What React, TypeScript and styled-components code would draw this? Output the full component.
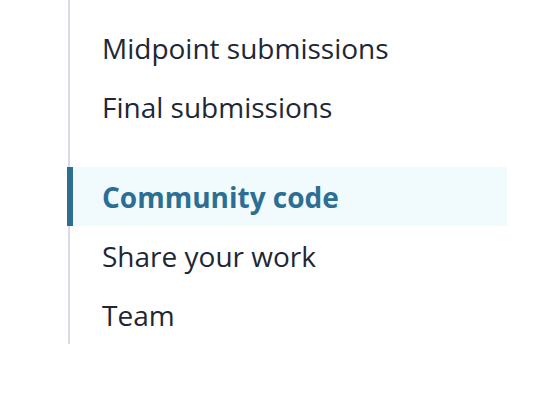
import styled, { createGlobalStyle } from "styled-components";

const GlobalStyle = createGlobalStyle`
    body {
        margin: 0;
        background: #ffffff;
        font-family: "Open Sans", "Noto Sans", sans-serif;
    }
`;

const Page = styled.div`
    padding-left: 68px;
    width: 552px;
    height: 396px;
    box-sizing: border-box;
`;

const SideNav = styled.nav`
    width: 437px;
    border-left: 2px solid #d9dbea;
    padding: 18px 0 0;
    display: flex;
    flex-direction: column;
`;

const Group = styled.ul`
    list-style: none;
    margin: 0;
    padding: 0;
    & + & {
        margin-top: 31px;
    }
`;

const Item = styled.li<{ $active?: boolean }>`
    position: relative;
    height: 59px;
    display: flex;
    align-items: center;
    padding-left: 32px;
    font-size: 28px;
    font-weight: ${p => (p.$active ? 700 : 400)};
    color: ${p => (p.$active ? "#2c6f93" : "#1e2733")};
    background: ${p => (p.$active ? "#f1fbfe" : "transparent")};
    &::before {
        content: "";
        display: ${p => (p.$active ? "block" : "none")};
        position: absolute;
        left: -3px;
        top: 0;
        bottom: 0;
        width: 6px;
        background: #2c6f93;
    }
`;

const groups = [
    [{ label: "Midpoint submissions" }, { label: "Final submissions" }],
    [
        { label: "Community code", active: true },
        { label: "Share your work" },
        { label: "Team" },
    ],
];

function App() {
    return (
        <Page>
            <GlobalStyle />
            <SideNav>
                {groups.map((items, i) => (
                    <Group key={i}>
                        {items.map(item => (
                            <Item key={item.label} $active={item.active}>
                                {item.label}
                            </Item>
                        ))}
                    </Group>
                ))}
            </SideNav>
        </Page>
    );
}
export default App;
